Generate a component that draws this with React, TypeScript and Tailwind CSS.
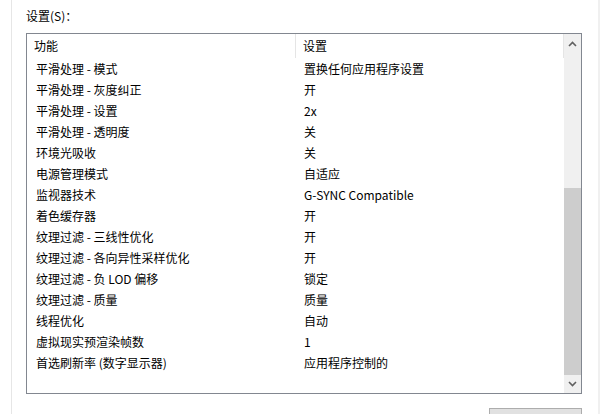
const rows: [string, string][] = [
  ["平滑处理 - 模式", "置换任何应用程序设置"],
  ["平滑处理 - 灰度纠正", "开"],
  ["平滑处理 - 设置", "2x"],
  ["平滑处理 - 透明度", "关"],
  ["环境光吸收", "关"],
  ["电源管理模式", "自适应"],
  ["监视器技术", "G-SYNC Compatible"],
  ["着色缓存器", "开"],
  ["纹理过滤 - 三线性优化", "开"],
  ["纹理过滤 - 各向异性采样优化", "开"],
  ["纹理过滤 - 负 LOD 偏移", "锁定"],
  ["纹理过滤 - 质量", "质量"],
  ["线程优化", "自动"],
  ["虚拟现实预渲染帧数", "1"],
  ["首选刷新率 (数字显示器)", "应用程序控制的"],
];

function Caret({ down }: { down?: boolean }) {
  return (
    <svg width="9" height="6" viewBox="0 0 9 6" className={down ? "rotate-180" : ""}>
      <path d="M1 5 L4.5 1.5 L8 5" fill="none" stroke="#606060" strokeWidth="1.6" />
    </svg>
  );
}

export default function App() {
  return (
    <div
      className="relative flex h-[414px] w-[604px] overflow-hidden bg-white text-[12px] text-black"
      style={{ fontFamily: '"Noto Sans CJK SC", "Noto Sans", sans-serif' }}
    >
      <div className="w-[11px] shrink-0" />
      <div className="w-px shrink-0 bg-[#e6e6e6]" />
      <div className="flex w-[586px] shrink-0 flex-col pl-[14px]">
        <div className="h-[33px] shrink-0 pt-[6px] leading-[20px]">设置(S)：</div>
        <div className="flex h-[361px] w-[556px] shrink-0 border border-[#828790]">
          <div className="flex flex-1 flex-col">
            <div className="flex h-[24px] shrink-0 items-center leading-[24px]">
              <div className="w-[269px] border-r border-[#e5e5e5] pl-[7px]">功能</div>
              <div className="flex-1 border-r border-[#e5e5e5] pl-[7px]">设置</div>
            </div>
            {rows.map(([a, b]) => (
              <div key={a} className="flex h-[21px] shrink-0 items-center leading-[21px]">
                <div className="w-[269px] pl-[9px]">{a}</div>
                <div className="flex-1 pl-[8px]">{b}</div>
              </div>
            ))}
          </div>
          <div className="flex w-[17px] flex-col bg-[#f0f0f0]">
            <div className="flex h-[17px] shrink-0 items-center justify-center pt-[2px]">
              <Caret />
            </div>
            <div className="h-[137px] shrink-0" />
            <div className="h-[187px] shrink-0 bg-[#cdcdcd]" />
            <div className="flex flex-1 items-center justify-center">
              <Caret down />
            </div>
          </div>
        </div>
        <div className="flex w-[556px] shrink-0 justify-end pt-[14px]">
          <div className="flex h-[23px] w-[93px] items-start justify-center border border-[#adadad] bg-[#e1e1e1] pt-[3px] leading-[16px]">
            恢复(T)
          </div>
        </div>
      </div>
      <div className="w-[2px] shrink-0 bg-[#f0f0f0]" />
    </div>
  );
}
